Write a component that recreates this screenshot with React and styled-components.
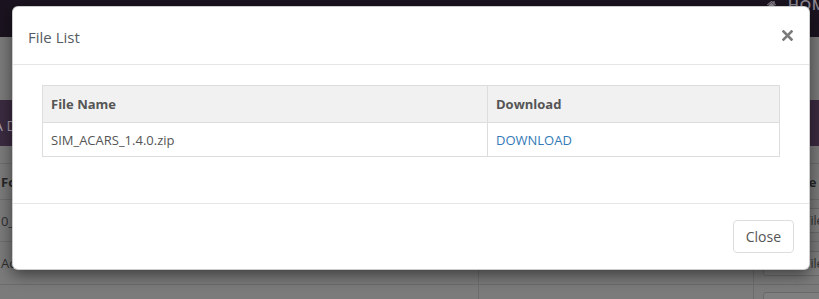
import React from "react";
import styled, { createGlobalStyle } from "styled-components";
import { FaHome } from "react-icons/fa";

const GlobalStyle = createGlobalStyle`
  html, body {
    margin: 0;
    padding: 0;
    height: 100%;
    overflow: hidden;
    background: #7b7b7b;
  }
  body {
    font-family: "Open Sans", "DejaVu Sans", sans-serif;
    color: #333;
  }
  * {
    box-sizing: border-box;
  }
`;

const Page = styled.div`
  position: relative;
  width: 819px;
  height: 299px;
  overflow: hidden;
  background: #7b7b7b;
`;

const NavBar = styled.div`
  height: 37px;
  background: #1b1420;
  display: flex;
  justify-content: flex-end;
  align-items: flex-start;
`;

const NavItem = styled.div`
  display: flex;
  align-items: center;
  gap: 12px;
  margin-top: -6px;
  margin-right: -16px;
  color: #8c8791;
  font-size: 15px;
  font-weight: 600;
  text-transform: uppercase;
  letter-spacing: 0.5px;
  svg {
    width: 9px;
    height: 9px;
  }
`;

const Spacer = styled.div`
  height: ${(p) => p.h}px;
`;

const Band = styled.div`
  height: 46px;
  background: #3b2b41;
  color: #a79fae;
  font-size: 14px;
  display: flex;
  align-items: center;
  margin-left: -6px;
  padding-top: 4px;
  white-space: nowrap;
`;

const BgTable = styled.div`
  display: flex;
  flex-direction: column;
`;

const BgRow = styled.div`
  display: grid;
  grid-template-columns: 478px 275px 1fr;
  height: ${(p) => p.h}px;
  border-top: 1px solid #6d6d6d;
  font-size: 13px;
  font-weight: ${(p) => (p.head ? 700 : 400)};
  color: ${(p) => (p.head ? "#262626" : "#2f2f2f")};
`;

const BgCell = styled.div`
  display: flex;
  align-items: ${(p) => (p.low ? "flex-end" : p.top ? "flex-start" : "center")};
  padding-left: ${(p) => p.pl ?? 1}px;
  padding-top: ${(p) => (p.top ? 7 : 0)}px;
  margin-bottom: ${(p) => (p.low ? -8 : 0)}px;
  border-left: ${(p) => (p.line ? "1px solid #6d6d6d" : "none")};
  white-space: nowrap;
  overflow: hidden;
`;

const BgButton = styled.div`
  margin-left: 8px;
  height: 25px;
  padding: 0 11px;
  display: flex;
  align-items: center;
  border: 1px solid #6a6a6a;
  border-radius: 3px;
  background: #7f7f7f;
  font-size: 12px;
  white-space: nowrap;
`;

const Modal = styled.div`
  position: absolute;
  top: 6px;
  left: 12px;
  width: 798px;
  background: #fff;
  border: 1px solid rgba(0, 0, 0, 0.2);
  border-radius: 6px;
  box-shadow: 0 5px 15px rgba(0, 0, 0, 0.5);
  overflow: hidden;
`;

const ModalHeader = styled.div`
  display: flex;
  justify-content: space-between;
  align-items: flex-start;
  padding: 17px 16px 13px 15px;
  border-bottom: 1px solid #e5e5e5;
`;

const Title = styled.h4`
  margin: 0;
  font-size: 15px;
  line-height: 27px;
  font-weight: 400;
  color: #555c63;
`;

const CloseX = styled.button`
  border: 0;
  background: none;
  padding: 0;
  margin-top: 6px;
  width: 11px;
  height: 11px;
  cursor: pointer;
  display: flex;
  svg {
    display: block;
  }
`;

const ModalBody = styled.div`
  padding: 20px 29px 46px 29px;
`;

const FileTable = styled.div`
  border: 1px solid #ddd;
  font-size: 13px;
  color: #555;
`;

const FileRow = styled.div`
  display: grid;
  grid-template-columns: 444px 1fr;
  height: ${(p) => (p.head ? 37 : 33)}px;
  background: ${(p) => (p.head ? "#f1f1f1" : "#fff")};
  border-bottom: ${(p) => (p.head ? "1px solid #ddd" : "none")};
  font-weight: ${(p) => (p.head ? 700 : 400)};
`;

const FileCell = styled.div`
  display: flex;
  align-items: center;
  padding: 0 8px;
  border-left: ${(p) => (p.first ? "none" : "1px solid #ddd")};
`;

const DownloadLink = styled.a`
  color: #337ab7;
  text-decoration: none;
  text-transform: uppercase;
`;

const ModalFooter = styled.div`
  display: flex;
  justify-content: flex-end;
  padding: 16px 15px 16px;
  border-top: 1px solid #e5e5e5;
`;

const Button = styled.button`
  font-family: "Open Sans", "DejaVu Sans", sans-serif;
  font-size: 14px;
  line-height: 19px;
  padding: 6px 12px;
  height: 33px;
  color: #555;
  background: #fff;
  border: 1px solid #ddd;
  border-radius: 4px;
  cursor: pointer;
`;

const files = [{ name: "SIM_ACARS_1.4.0.zip", url: "#" }];

export default function App() {
  return (
    <Page>
      <GlobalStyle />
      <NavBar>
        <NavItem>
          <FaHome />
          <span>Home</span>
        </NavItem>
      </NavBar>
      <Spacer h={63} />
      <Band>A Downloads</Band>
      <Spacer h={17} />
      <BgTable>
        <BgRow head h={36}>
          <BgCell>Form Name</BgCell>
          <BgCell line pl={8}>Version</BgCell>
          <BgCell line pl={22}>Active</BgCell>
        </BgRow>
        <BgRow h={42}>
          <BgCell>0_Flight Plan</BgCell>
          <BgCell line pl={12}>1</BgCell>
          <BgCell line>
            <BgButton>View Files</BgButton>
          </BgCell>
        </BgRow>
        <BgRow h={43}>
          <BgCell>Aci Form</BgCell>
          <BgCell line pl={12}>1</BgCell>
          <BgCell line>
            <BgButton>View Files</BgButton>
          </BgCell>
        </BgRow>
        <BgRow h={30}>
          <BgCell low>Arr. Form | PDF</BgCell>
          <BgCell line low pl={12}>1</BgCell>
          <BgCell line top>
            <BgButton>View Files</BgButton>
          </BgCell>
        </BgRow>
      </BgTable>

      <Modal>
        <ModalHeader>
          <Title>File List</Title>
          <CloseX aria-label="Close">
            <svg width="11" height="11" viewBox="0 0 11 11">
              <path
                d="M1.5 1.5 L9.5 9.5 M9.5 1.5 L1.5 9.5"
                stroke="#7a7a7a"
                strokeWidth="2.6"
                strokeLinecap="square"
              />
            </svg>
          </CloseX>
        </ModalHeader>
        <ModalBody>
          <FileTable>
            <FileRow head>
              <FileCell first>File Name</FileCell>
              <FileCell>Download</FileCell>
            </FileRow>
            {files.map((f) => (
              <FileRow key={f.name}>
                <FileCell first>{f.name}</FileCell>
                <FileCell>
                  <DownloadLink href={f.url}>Download</DownloadLink>
                </FileCell>
              </FileRow>
            ))}
          </FileTable>
        </ModalBody>
        <ModalFooter>
          <Button>Close</Button>
        </ModalFooter>
      </Modal>
    </Page>
  );
}
